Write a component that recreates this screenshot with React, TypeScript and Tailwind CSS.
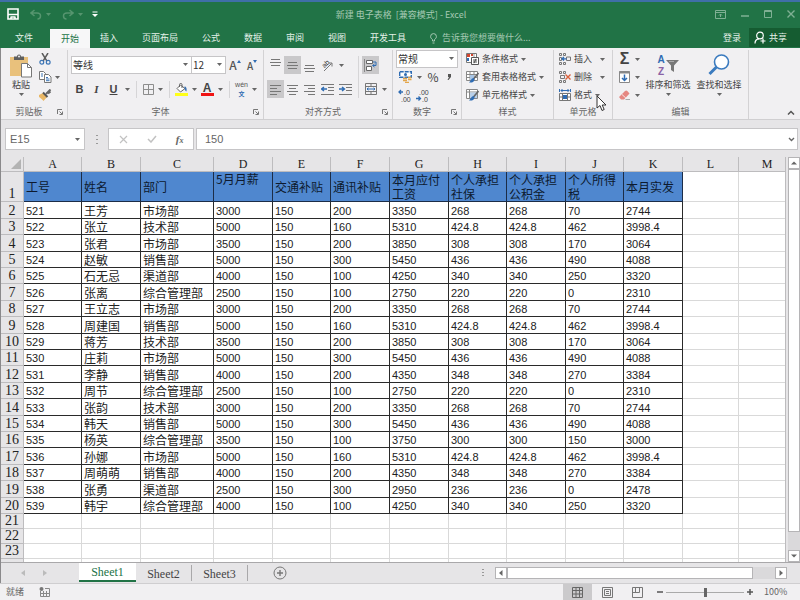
import { useState } from "react";
import type { ReactNode } from "react";

const COLUMNS = [
  { name: "A", width: "w-[58px]" },
  { name: "B", width: "w-[59px]" },
  { name: "C", width: "w-[73px]" },
  { name: "D", width: "w-[59px]" },
  { name: "E", width: "w-[58px]" },
  { name: "F", width: "w-[59px]" },
  { name: "G", width: "w-[59px]" },
  { name: "H", width: "w-[58px]" },
  { name: "I", width: "w-[59px]" },
  { name: "J", width: "w-[58px]" },
  { name: "K", width: "w-[59px]" },
  { name: "L", width: "w-[56px]" },
  { name: "M", width: "w-[57px]" },
];

const FIELDS = [
  "工号", "姓名", "部门", "5月月薪", "交通补贴", "通讯补贴",
  "本月应付工资", "个人承担社保", "个人承担公积金", "个人所得税", "本月实发",
];

const ROWS = [
  ["521", "王芳", "市场部", "3000", "150", "200", "3350", "268", "268", "70", "2744"],
  ["522", "张立", "技术部", "5000", "150", "160", "5310", "424.8", "424.8", "462", "3998.4"],
  ["523", "张君", "市场部", "3500", "150", "200", "3850", "308", "308", "170", "3064"],
  ["524", "赵敏", "销售部", "5000", "150", "300", "5450", "436", "436", "490", "4088"],
  ["525", "石无忌", "渠道部", "4000", "150", "100", "4250", "340", "340", "250", "3320"],
  ["526", "张离", "综合管理部", "2500", "150", "100", "2750", "220", "220", "0", "2310"],
  ["527", "王立志", "市场部", "3000", "150", "200", "3350", "268", "268", "70", "2744"],
  ["528", "周建国", "销售部", "5000", "150", "160", "5310", "424.8", "424.8", "462", "3998.4"],
  ["529", "蒋芳", "技术部", "3500", "150", "200", "3850", "308", "308", "170", "3064"],
  ["530", "庄莉", "市场部", "5000", "150", "300", "5450", "436", "436", "490", "4088"],
  ["531", "李静", "销售部", "4000", "150", "200", "4350", "348", "348", "270", "3384"],
  ["532", "周节", "综合管理部", "2500", "150", "100", "2750", "220", "220", "0", "2310"],
  ["533", "张韵", "技术部", "3000", "150", "200", "3350", "268", "268", "70", "2744"],
  ["534", "韩天", "销售部", "5000", "150", "300", "5450", "436", "436", "490", "4088"],
  ["535", "杨英", "综合管理部", "3500", "150", "100", "3750", "300", "300", "150", "3000"],
  ["536", "孙娜", "市场部", "5000", "150", "160", "5310", "424.8", "424.8", "462", "3998.4"],
  ["537", "周萌萌", "销售部", "4000", "150", "200", "4350", "348", "348", "270", "3384"],
  ["538", "张勇", "渠道部", "2500", "150", "300", "2950", "236", "236", "0", "2478"],
  ["539", "韩宇", "综合管理部", "4000", "150", "100", "4250", "340", "340", "250", "3320"],
];

const MENU_TABS = ["插入", "页面布局", "公式", "数据", "审阅", "视图", "开发工具"];

/* ---------- icons ---------- */

function Svg({ w, h, children }: { w: number; h: number; children: ReactNode }) {
  return (
    <svg width={w} height={h} viewBox={`0 0 ${w} ${h}`} fill="none" className="shrink-0" aria-hidden="true">
      {children}
    </svg>
  );
}

const Caret = ({ color = "#666" }: { color?: string }) => (
  <Svg w={5} h={3}><path d="M0 0h5L2.5 3z" fill={color} /></Svg>
);

const SaveIcon = () => (
  <Svg w={12} h={12}>
    <path d="M1 1h10v10H1z" stroke="#fff" strokeWidth="1.6" />
    <path d="M1 6.500h10M4 8.500v2.500M8 8.500v2.500M4 9h4" stroke="#fff" strokeWidth="1.5" />
  </Svg>
);

const UndoIcon = () => (
  <Svg w={12} h={11}>
    <path d="M4.500 1 1 4l3.500 3M1.500 4H7c2 0 3.500 1.200 3.500 3S9.500 10 7.500 10" stroke="#56956f" strokeWidth="1.500" />
  </Svg>
);

const RedoIcon = () => (
  <Svg w={12} h={11}>
    <path d="M7.500 1 11 4 7.500 7M10.500 4H5C3 4 1.500 5.200 1.500 7S2.500 10 4.500 10" stroke="#56956f" strokeWidth="1.500" />
  </Svg>
);

const PasteIcon = () => (
  <Svg w={22} h={24}>
    <path d="M0 3h18v19H0z" fill="#e9c17c" />
    <path d="M4 2.500h3a2 2 0 0 1 4 0h3V6H4z" fill="#5f5f5f" />
    <circle cx="9" cy="2.500" r="1" fill="#f1f0f2" />
    <path d="M11.500 9.500h6l4 4v9.500h-10z" fill="#fff" stroke="#777" />
    <path d="M17.500 9.500v4h4" stroke="#777" />
  </Svg>
);

const CutIcon = () => (
  <Svg w={12} h={12}>
    <path d="M3 0l4.800 7.800M9 0 4.200 7.800" stroke="#5c5c5c" strokeWidth="1.500" />
    <circle cx="2.800" cy="9.300" r="1.900" stroke="#3b74b5" strokeWidth="1.200" />
    <circle cx="9.200" cy="9.300" r="1.900" stroke="#3b74b5" strokeWidth="1.200" />
  </Svg>
);

const CopyIcon = () => (
  <Svg w={13} h={12}>
    <path d="M.5.5h4l2 2v6h-6z" fill="#fff" stroke="#777" />
    <path d="M2 3h2M2 5h2" stroke="#3b74b5" />
    <path d="M5.500 3.500h4l2.500 2.500v5.500H5.500z" fill="#fff" stroke="#777" />
    <path d="M7 6.500h2M7 8h3.500M7 9.700h3.500" stroke="#3b74b5" />
  </Svg>
);

const BrushIcon = () => (
  <Svg w={13} h={12}>
    <path d="M0 6l4-2 4 4-3.500 4C3 10 1.500 9 0 8z" fill="#e9b765" />
    <path d="M4 3.500 8.500 8" stroke="#555" strokeWidth="2" />
    <path d="M7 5l4.500-4.500M9 4.500l2.500-2" stroke="#666" strokeWidth="2" />
  </Svg>
);

const BordersIcon = () => (
  <Svg w={11} h={11}>
    <path d="M.5.5h10v10H.5zM5.500.5v10M.5 5.500h10" stroke="#8d8d8d" />
  </Svg>
);

const FillIcon = () => (
  <Svg w={14} h={13}>
    <path d="M5.500 2 2 5.500 5.500 9 10 5.500z" fill="#fff" stroke="#666" />
    <path d="M4.500 4V1.500c0-1.500 2.500-1.500 2.500 0V5" stroke="#666" />
    <path d="M9.500 3.500c2 0 2.500 2 2 5-1.500-.5-1.500-2-2-3z" fill="#3b74b5" />
    <path d="M0 10h13v3H0z" fill="#ffff1a" />
  </Svg>
);

const PhoneticIcon = () => (
  <span className="flex flex-col items-center">
    <span className="text-[7px] leading-[8px] text-[#555]">wén</span>
    <span className="font-['Noto_Sans_CJK_SC',sans-serif] text-[6px] leading-[9px] font-bold text-[#2f6cb3]">文</span>
  </span>
);

function LinesIcon({ d }: { d: string }) {
  return <Svg w={11} h={13}><path d={d} stroke="#777" /></Svg>;
}

const OrientationIcon = () => (
  <Svg w={14} h={14}>
    <text x="2" y="8" fontSize="7" fill="#333" className="font-['Liberation_Sans',sans-serif]" transform="rotate(-45 6 6)">ab</text>
    <path d="M4 13l7.500-7.500M8.500 5H12v3.500" stroke="#777" />
  </Svg>
);

function IndentIcon({ right = false }: { right?: boolean }) {
  return (
    <Svg w={13} h={11}>
      <path d="M0 .5h13M7 3.500h6M7 6.500h6M0 10.500h13" stroke="#777" />
      <path d={right ? "M0 5h5M3 3l2.500 2L3 7" : "M6 5H1M3 3 .5 5 3 7"} stroke="#2f6cb3" strokeWidth="1.400" />
    </Svg>
  );
}

const WrapIcon = () => (
  <Svg w={13} h={13}>
    <path d="M.5 0v13" stroke="#888" />
    <path d="M2.500 1.500h6v3h-6zM2.500 7.500h5v4h-5z" fill="#fff" stroke="#666" />
    <path d="M9 3h3v3.500H9M10.500 5 8.500 6.500l2 1.500" stroke="#2f6cb3" />
  </Svg>
);

const MergeIcon = () => (
  <Svg w={12} h={12}>
    <path d="M.5.5h11v11H.5zM.5 3.500h11M.5 8.500h11M6 .5v3M6 8.500v3" stroke="#777" />
    <path d="M2 6h8M3.500 4.800 2 6l1.500 1.200M8.500 4.800 10 6 8.500 7.200" stroke="#2f6cb3" />
  </Svg>
);

const CurrencyIcon = () => (
  <Svg w={13} h={12}>
    <path d="M.7.7h11.600v5.600H.7z" fill="#fff" stroke="#2f6cb3" strokeWidth="1.400" strokeDasharray="4 1" />
    <circle cx="6.500" cy="3.500" r="1.500" fill="#2f6cb3" />
    <path d="M4 7.500h4M4 9.500h4M9 6.500h3.500M9 8.500h3.500M6 11.500h4" stroke="#e3a64c" strokeWidth="1.500" />
  </Svg>
);

function DecimalIcon({ more = false }: { more?: boolean }) {
  return (
    <Svg w={14} h={13}>
      <path d={more ? "M5 3H1M3 1 1 3l2 2" : "M0 9.500h4M2.500 7.500l2 2-2 2"} stroke="#2f6cb3" strokeWidth="1.300" />
      <text x={more ? 6 : 3} y="6" fontSize="7" fill="#444">{more ? ".0" : ".00"}</text>
      <text x={more ? 3 : 6} y="13" fontSize="7" fill="#444">{more ? ".00" : ".0"}</text>
    </Svg>
  );
}

const CondFormatIcon = () => (
  <Svg w={13} h={12}>
    <path d="M.5.5h10v9H.5z" fill="#fff" stroke="#777" />
    <path d="M1 1h3v3H1zM5 1h2v2H5z" fill="#d2452f" />
    <path d="M1 5h2v3H1z" fill="#2f6cb3" />
    <path d="M8 1v3" stroke="#999" />
    <path d="M5.500 4.500h7v7h-7z" fill="#fff" stroke="#555" />
    <path d="M7 7h4M7 9h4M10 5.800 8 10.200" stroke="#444" strokeWidth=".9" />
  </Svg>
);

const TableFormatIcon = () => (
  <Svg w={13} h={12}>
    <path d="M.5.5h11v9H.5zM.5 3.500h11M.5 6.500h11M4 .5v9M8 .5v9" fill="#fff" stroke="#888" />
    <path d="M4 4h4v5H4z" fill="#a9c6e6" />
    <path d="M12.500 2 7.500 8" stroke="#666" strokeWidth="1.600" />
    <path d="M7.500 7c-2 0-2.500 2.500-4.500 4.500 3 .5 5.500-.5 5.500-3.500z" fill="#2f6cb3" />
  </Svg>
);

const CellStyleIcon = () => (
  <Svg w={13} h={12}>
    <path d="M.5.5h11v9H.5zM.5 3h11M3.500 .5v9" fill="#fff" stroke="#888" />
    <path d="M4 3.500h7v5.500H4z" fill="#b9d0ea" />
    <path d="M12.500 2 7.500 8" stroke="#666" strokeWidth="1.600" />
    <path d="M7.500 7c-2 0-2.500 2.500-4.500 4.500 3 .5 5.500-.5 5.500-3.500z" fill="#2f6cb3" />
  </Svg>
);

const InsertCellIcon = () => (
  <Svg w={12} h={12}>
    <path d="M.5.5h2v2h-2zM4.500.5h2v2h-2zM.5 9.500h2v2h-2zM4.500 9.500h2v2h-2zM.5 4.500h2v3h-2zM7.500 4h4v3.500h-4z" stroke="#777" />
    <path d="M7.500 5.800h-4M5 4 3 5.800l2 1.700" stroke="#2f6cb3" strokeWidth="1.300" />
  </Svg>
);

const DeleteCellIcon = () => (
  <Svg w={12} h={12}>
    <path d="M.5.5h2v2h-2zM4.500.5h2v2h-2zM.5 9.500h2v2h-2zM4.500 9.500h2v2h-2zM1.500 4.500h4v3h-4z" stroke="#777" />
    <path d="M6.500 3.500l5 5M11.500 3.500l-5 5" stroke="#d9603b" strokeWidth="1.400" />
  </Svg>
);

const FormatCellIcon = () => (
  <Svg w={12} h={12}>
    <path d="M.5 0v3M11.500 0v3M2 1.500h8M3.500 0 2 1.500 3.500 3M8.500 0 10 1.500 8.500 3" stroke="#2f6cb3" />
    <path d="M.5 4.500h11v7H.5zM3.500 4.500v7M8.500 4.500v7M.5 8h11" fill="#fff" stroke="#777" />
    <path d="M4 6h4v4H4z" fill="#2f6cb3" />
  </Svg>
);

const FillDownIcon = () => (
  <Svg w={11} h={12}>
    <path d="M.5.5h10v11H.5z" fill="#fff" stroke="#888" />
    <path d="M0 1.500h11" stroke="#888" strokeWidth="2" />
    <path d="M5.500 3.500V9M3 7l2.500 2.500L8 7" stroke="#2f6cb3" strokeWidth="1.500" />
  </Svg>
);

const EraserIcon = () => (
  <Svg w={12} h={11}>
    <path d="M0 7 6 1c.8-.8 1.700-.8 2.300 0L10.500 3.500 5 9.500H2z" fill="#e58782" />
    <path d="M3 4.500l3.800 3.500" stroke="#fff" strokeWidth=".8" />
    <path d="M6.500 9.500h4.500" stroke="#aaa" />
  </Svg>
);

const SortFilterIcon = () => (
  <span className="flex items-center gap-px font-['Liberation_Sans',sans-serif] text-[10px] leading-[12px] font-bold">
    <span className="flex flex-col">
      <span className="text-[#2f6cb3]">A</span>
      <span className="text-[#8a62a5]">Z</span>
    </span>
    <Svg w={13} h={13}>
      <path d="M0 0h13L8 5.500V12l-3-2V5.500z" fill="#777" />
      <path d="M3 1.500h5" stroke="#aaa" />
    </Svg>
  </span>
);

const FindIcon = () => (
  <Svg w={22} h={22}>
    <circle cx="13.500" cy="8" r="7" fill="#fff" stroke="#3b7bbf" strokeWidth="1.600" />
    <path d="M8.500 13 1.500 20" stroke="#3b7bbf" strokeWidth="3" />
  </Svg>
);

const LauncherIcon = () => (
  <Svg w={6} h={6}>
    <path d="M.5 5V.5H5M2.500 2.500 5 5M5.500 2.500v3h-3" stroke="#777" />
  </Svg>
);

/* ---------- ribbon pieces ---------- */

function Tool({ label, className, active = false, children }: {
  label: string; className: string; active?: boolean; children: ReactNode;
}) {
  return (
    <button
      type="button"
      aria-label={label}
      className={`flex h-[18px] shrink-0 items-center justify-center ${active ? "bg-[#c9c8ca]" : ""} ${className}`}
    >
      {children}
    </button>
  );
}

const Drop = ({ label }: { label: string }) => (
  <Tool label={label} className="w-[10px]"><Caret /></Tool>
);

const Sep = () => <span className="mx-1 h-[17px] w-px shrink-0 bg-[#d6d5d7]" />;

function Group({ title, width, launcher = false, children }: {
  title: string; width: string; launcher?: boolean; children: ReactNode;
}) {
  return (
    <section className={`relative mt-0.5 flex shrink-0 flex-col border-r border-[#d3d2d4] ${width}`}>
      <div className="flex h-[54px]">{children}</div>
      <div className="flex h-[15px] items-center">
        <h2 className="flex-1 text-center text-[9px] leading-[15px] text-[#666]">{title}</h2>
        {launcher && (
          <button type="button" aria-label={`${title}设置`} className="w-[10px]"><LauncherIcon /></button>
        )}
      </div>
    </section>
  );
}

function Picker({ label, options, className }: { label: string; options: string[]; className: string }) {
  return (
    <div className={`relative h-[18px] border border-[#c6c5c7] bg-white ${className}`}>
      <select
        aria-label={label}
        className="block h-4 w-full appearance-none bg-transparent pl-px text-[10px] leading-4 text-[#333] outline-none"
      >
        {options.map(o => <option key={o}>{o}</option>)}
      </select>
      <span className="pointer-events-none absolute top-[6px] right-[3px]"><Caret /></span>
    </div>
  );
}

function MenuRow({ icon, text, caret = "ml-[3px]" }: { icon: ReactNode; text: string; caret?: string }) {
  return (
    <button type="button" className="flex h-[18px] items-center whitespace-nowrap text-[9px] text-[#444]">
      {icon}
      <span className="ml-[3px]">{text}</span>
      <span className={caret}><Caret /></span>
    </button>
  );
}

function BigButton({ icon, text, className }: { icon: ReactNode; text: string; className: string }) {
  return (
    <button type="button" className={`flex shrink-0 flex-col items-center pt-1 text-[9px] text-[#444] ${className}`}>
      <span className="flex h-[24px] items-start">{icon}</span>
      <span className="whitespace-nowrap leading-[13px]">{text}</span>
      <span className="mt-0.5"><Caret /></span>
    </button>
  );
}

function Ribbon() {
  return (
    <div className="flex h-[72px] shrink-0 border-b border-[#d0cfd1] bg-[#f1f0f2]">
      <Group title="剪贴板" width="w-[67px]" launcher>
        <BigButton icon={<PasteIcon />} text="粘贴" className="ml-1 w-[32px]" />
        <div className="ml-px flex flex-col">
          <Tool label="剪切" className="w-[14px]"><CutIcon /></Tool>
          <div className="flex">
            <Tool label="复制" className="w-[14px]"><CopyIcon /></Tool>
            <Drop label="复制选项" />
          </div>
          <Tool label="格式刷" className="w-[14px]"><BrushIcon /></Tool>
        </div>
      </Group>

      <Group title="字体" width="w-[196px]" launcher>
        <div className="flex flex-col gap-1.5 px-[3px] pt-1.5">
          <div className="flex">
            <Picker label="字体名称" options={["等线", "宋体", "黑体"]} className="w-[121px]" />
            <Picker label="字号" options={["12", "11", "14"]} className="w-[34px] border-l-0" />
            <Tool label="增大字号" className="w-[18px]">
              <span className="text-[12px] font-medium text-[#555]">A</span>
              <span className="-mt-2"><Svg w={4} h={3}><path d="M0 3h4L2 0z" fill="#2f6cb3" /></Svg></span>
            </Tool>
            <Tool label="减小字号" className="w-[16px]">
              <span className="text-[10px] font-medium text-[#555]">A</span>
              <span className="-mt-2"><Svg w={4} h={3}><path d="M0 0h4L2 3z" fill="#2f6cb3" /></Svg></span>
            </Tool>
          </div>
          <div className="flex items-center font-['Liberation_Sans',sans-serif] text-[11px] text-[#444]">
            <Tool label="加粗" className="w-[17px] font-bold">B</Tool>
            <Tool label="倾斜" className="w-[17px] font-['Liberation_Serif',serif] font-bold italic">I</Tool>
            <Tool label="下划线" className="w-[17px] font-bold underline">U</Tool>
            <Drop label="下划线选项" />
            <Sep />
            <Tool label="边框" className="w-[14px]"><BordersIcon /></Tool>
            <Drop label="边框选项" />
            <Sep />
            <Tool label="填充颜色" className="w-[15px]"><FillIcon /></Tool>
            <Drop label="填充颜色选项" />
            <Tool label="字体颜色" className="w-[16px]">
              <span className="flex flex-col items-center">
                <span className="text-[12px] leading-[10px] font-bold">A</span>
                <span className="h-[3px] w-[13px] bg-[#f01414]" />
              </span>
            </Tool>
            <Drop label="字体颜色选项" />
            <Sep />
            <Tool label="拼音" className="w-[15px]"><PhoneticIcon /></Tool>
            <Drop label="拼音选项" />
          </div>
        </div>
      </Group>

      <Group title="对齐方式" width="w-[129px]" launcher>
        <div className="flex flex-col gap-1.5 pt-1.5 pl-[3px]">
          <div className="flex">
            <Tool label="顶端对齐" className="w-[17px]"><LinesIcon d="M1 .5h9M0 3.500h11M1 6.500h9" /></Tool>
            <Tool label="垂直居中" active className="w-[17px]"><LinesIcon d="M1 3.500h9M0 6.500h11M1 9.500h9" /></Tool>
            <Tool label="底端对齐" className="w-[17px]"><LinesIcon d="M1 6.500h9M0 9.500h11M1 12.500h9" /></Tool>
            <Tool label="方向" className="w-[18px]"><OrientationIcon /></Tool>
            <Drop label="方向选项" />
          </div>
          <div className="flex">
            <Tool label="左对齐" active className="w-[17px]"><LinesIcon d="M0 2.500h11M0 5.500h7M0 8.500h11M0 11.500h7" /></Tool>
            <Tool label="居中" className="w-[17px]"><LinesIcon d="M0 2.500h11M2 5.500h7M0 8.500h11M2 11.500h7" /></Tool>
            <Tool label="右对齐" className="w-[17px]"><LinesIcon d="M0 2.500h11M4 5.500h7M0 8.500h11M4 11.500h7" /></Tool>
            <Tool label="减少缩进" className="w-[18px]"><IndentIcon /></Tool>
            <Tool label="增加缩进" className="w-[18px]"><IndentIcon right /></Tool>
          </div>
        </div>
        <span className="mt-1.5 mr-[3px] ml-1 h-[42px] w-px bg-[#d6d5d7]" />
        <div className="flex flex-col gap-1.5 pt-1.5">
          <Tool label="自动换行" active className="w-[17px]"><WrapIcon /></Tool>
          <div className="flex">
            <Tool label="合并后居中" className="w-[17px]"><MergeIcon /></Tool>
            <Drop label="合并选项" />
          </div>
        </div>
      </Group>

      <Group title="数字" width="w-[69px]" launcher>
        <div className="flex flex-col pl-[3px]">
          <Picker label="数字格式" options={["常规", "数字", "货币"]} className="w-[62px]" />
          <div className="flex">
            <Tool label="会计数字格式" className="w-[18px]"><CurrencyIcon /></Tool>
            <Drop label="会计选项" />
            <Tool label="百分比样式" className="w-[18px] text-[12px] text-[#444]">%</Tool>
            <Tool label="千位分隔样式" className="w-[14px]">
              <Svg w={4} h={6}><path d="M1 0h3v3L1.500 6H.5L2 3H1z" fill="#555" /></Svg>
            </Tool>
          </div>
          <div className="flex font-['Liberation_Sans',sans-serif]">
            <Tool label="增加小数位数" className="w-[18px]"><DecimalIcon more /></Tool>
            <Tool label="减少小数位数" className="w-[18px]"><DecimalIcon /></Tool>
          </div>
        </div>
      </Group>

      <Group title="样式" width="w-[92px]">
        <div className="flex flex-col pl-1">
          <MenuRow icon={<CondFormatIcon />} text="条件格式" />
          <MenuRow icon={<TableFormatIcon />} text="套用表格格式" />
          <MenuRow icon={<CellStyleIcon />} text="单元格样式" />
        </div>
      </Group>

      <Group title="单元格" width="w-[59px]">
        <div className="flex flex-col pl-[5px]">
          <MenuRow icon={<InsertCellIcon />} text="插入" caret="ml-2" />
          <MenuRow icon={<DeleteCellIcon />} text="删除" caret="ml-2" />
          <MenuRow icon={<FormatCellIcon />} text="格式" />
        </div>
        {/* mouse pointer */}
        <span className="pointer-events-none absolute top-[45px] left-[42px] z-10">
          <Svg w={11} h={17}>
            <path d="M1 1v12l3-2.500L6 15.500l2.200-1-2-4.500H10z" fill="#fff" stroke="#333" />
          </Svg>
        </span>
      </Group>

      <Group title="编辑" width="w-[136px]">
        <div className="flex flex-col pl-1">
          <div className="flex">
            <Tool label="自动求和" className="w-[15px] font-['Liberation_Sans',sans-serif] text-[16px] font-bold text-[#444]">Σ</Tool>
            <Drop label="求和选项" />
          </div>
          <div className="flex"><Tool label="填充" className="w-[15px]"><FillDownIcon /></Tool><Drop label="填充选项" /></div>
          <div className="flex"><Tool label="清除" className="w-[15px]"><EraserIcon /></Tool><Drop label="清除选项" /></div>
        </div>
        <BigButton icon={<SortFilterIcon />} text="排序和筛选" className="w-[52px]" />
        <BigButton icon={<FindIcon />} text="查找和选择" className="w-[50px]" />
      </Group>

      <div className="flex flex-1 items-end justify-end pr-[5px] pb-1">
        <button type="button" aria-label="折叠功能区">
          <Svg w={8} h={5}><path d="M1 4.500 4 1.500l3 3" stroke="#555" strokeWidth="1.500" /></Svg>
        </button>
      </div>
    </div>
  );
}

/* ---------- window chrome ---------- */

function TitleBar() {
  return (
    <header className="shrink-0 border-t-2 border-[#3f6fa8] bg-[#217346] text-[9px] text-[#e4f1e9]">
      <div className="flex h-[26px] items-center">
        <div className="flex flex-1 items-center pb-0.5 pl-[7px]">
          <button type="button" aria-label="保存"><SaveIcon /></button>
          <button type="button" aria-label="撤消" className="ml-[11px] flex items-center gap-1"><UndoIcon /><Caret color="#56956f" /></button>
          <button type="button" aria-label="恢复" className="ml-[11px] flex items-center gap-1"><RedoIcon /><Caret color="#56956f" /></button>
          <button type="button" aria-label="自定义快速访问工具栏" className="ml-[9px]">
            <Svg w={6} h={6}><path d="M.5 1h5" stroke="#fff" /><path d="M0 3h6L3 6z" fill="#fff" /></Svg>
          </button>
        </div>
        <h1 className="whitespace-nowrap text-[#a5c9b3]">新建 电子表格&nbsp; [兼容模式] - Excel</h1>
        <div className="flex flex-1 items-center justify-end gap-[15px] pr-[5px] pb-0.5 text-[#7fb094]">
          <button type="button" aria-label="功能区显示选项">
            <Svg w={11} h={9}><path d="M.5.5h10v8H.5zM.5 2.500h10M5.500 7V4M4 5.500 5.500 4 7 5.500" stroke="currentColor" /></Svg>
          </button>
          <button type="button" aria-label="最小化"><Svg w={8} h={8}><path d="M0 6h8" stroke="currentColor" strokeWidth="1.500" /></Svg></button>
          <button type="button" aria-label="最大化"><Svg w={8} h={8}><path d="M.5.5h7v7h-7zM0 1.500h8" stroke="currentColor" /></Svg></button>
          <button type="button" aria-label="关闭"><Svg w={8} h={8}><path d="M.5.5l7 7M7.500.5l-7 7" stroke="currentColor" strokeWidth="1.400" /></Svg></button>
        </div>
      </div>
      <div className="flex h-[20px] items-stretch whitespace-nowrap">
        <button type="button" className="w-[50px] pr-0.5">文件</button>
        <button type="button" className="mt-px w-[40px] bg-[#f7f7f8] text-[#217346]">开始</button>
        <nav className="flex gap-6 pl-2.5">
          {MENU_TABS.map(t => <button type="button" key={t}>{t}</button>)}
        </nav>
        <label className="ml-[24px] flex items-center gap-[5px] text-[#a5c9b3]">
          <Svg w={7} h={11}>
            <path d="M2.500 8V6.500C1 5.500.6 4.500.6 3.500a2.900 2.900 0 0 1 5.800 0c0 1-.4 2-1.900 3V8zM2.500 10h2" stroke="currentColor" />
          </Svg>
          <input
            aria-label="告诉我"
            placeholder="告诉我您想要做什么..."
            className="w-[100px] bg-transparent outline-none placeholder:text-[#a5c9b3]"
          />
        </label>
        <div className="flex-1" />
        <button type="button" className="mr-2">登录</button>
        <button type="button" className="mb-px flex w-[51px] items-center gap-[3px] bg-[#155c31] pl-[5px]">
          <Svg w={12} h={13}>
            <circle cx="6" cy="4.500" r="3.300" stroke="#fff" strokeWidth="1.200" />
            <path d="M1 12.500c0-3 1.500-4.500 4-4.700M9 7.500v5M6.500 10h5" stroke="#fff" strokeWidth="1.200" />
          </Svg>
          共享
        </button>
      </div>
    </header>
  );
}

function FormulaBar() {
  const [value, setValue] = useState("150");
  return (
    <div className="flex shrink-0 pt-2 pr-0.5 pb-[7px] pl-1 font-['Liberation_Sans','Noto_Sans_CJK_SC',sans-serif] text-[11px] text-[#666]">
      <div className="relative flex h-[22px] w-[80px] items-center border border-[#c6c5c7] bg-white">
        <input aria-label="名称框" defaultValue="E15" className="w-full bg-transparent pl-1 outline-none" />
        <button type="button" aria-label="名称列表" className="pr-1"><Caret /></button>
      </div>
      <span className="flex w-[23px] items-center justify-center">
        <Svg w={2} h={9}><path d="M1 0v9" stroke="#999" strokeWidth="2" strokeDasharray="1 3" /></Svg>
      </span>
      <div className="flex h-[22px] w-[86px] items-center justify-around border border-[#c6c5c7] bg-white">
        <button type="button" aria-label="取消"><Svg w={9} h={9}><path d="M1 1l7 7M8 1 1 8" stroke="#c2c2c2" strokeWidth="1.200" /></Svg></button>
        <button type="button" aria-label="输入"><Svg w={10} h={8}><path d="M1 4l3 3 5-6" stroke="#c2c2c2" strokeWidth="1.500" /></Svg></button>
        <button type="button" aria-label="插入函数" className="font-['Liberation_Serif',serif] font-bold italic">
          f<span className="text-[8px]">x</span>
        </button>
      </div>
      <div className="ml-0.5 flex h-[22px] flex-1 items-center border border-[#c6c5c7] bg-white">
        <input
          aria-label="编辑栏"
          value={value}
          onChange={e => setValue(e.target.value)}
          className="min-w-0 flex-1 bg-transparent pl-2 outline-none"
        />
        <button type="button" aria-label="展开编辑栏" className="pr-0.5">
          <Svg w={7} h={5}><path d="M1 1l2.500 2.500L6 1" stroke="#666" strokeWidth="1.400" /></Svg>
        </button>
      </div>
    </div>
  );
}

/* ---------- sheet ---------- */

const ROW_HEAD = "border-r border-b border-[#bdbcbe] bg-[#e6e5e7] p-0 text-center align-bottom font-['Liberation_Serif',serif] text-[14px] font-normal text-[#222]";

function Sheet() {
  return (
    <table className="w-[795px] table-fixed border-separate border-spacing-0 text-[#222]">
      <colgroup>
        <col className="w-[23px]" />
        {COLUMNS.map(c => <col key={c.name} className={c.width} />)}
      </colgroup>
      <thead>
        <tr className="h-[15px] bg-[#e6e5e7]">
          <td className="border-r border-b border-[#bdbcbe] p-0">
            <span className="flex justify-end pr-0.5">
              <Svg w={10} h={10}><path d="M10 0v10H0z" fill="#b3b3b3" /></Svg>
            </span>
          </td>
          {COLUMNS.map(c => (
            <th
              key={c.name}
              scope="col"
              className="border-r border-b border-[#bdbcbe] p-0 font-['Liberation_Serif',serif] text-[12px] leading-[14px] font-normal"
            >
              {c.name}
            </th>
          ))}
        </tr>
      </thead>
      <tbody>
        <tr className="h-[30px]">
          <th scope="row" className={`${ROW_HEAD} leading-[14px]`}>1</th>
          {FIELDS.map(f => (
            <td
              key={f}
              className={`border-r border-b border-[#1c2d47] bg-[#4f87cf] p-0 pl-0.5 text-[12px] leading-[14px] text-[#0d1a2e] ${
                f === "5月月薪" ? "align-top" : "align-middle"
              }`}
            >
              {f}
            </td>
          ))}
          <td className="border-r border-b border-[#d9d9d9]" />
          <td className="border-r border-b border-[#d9d9d9]" />
        </tr>
        {ROWS.map((row, i) => (
          <tr key={row[0]} className={i % 5 === 0 || i % 5 === 2 ? "h-[17px]" : "h-[16px]"}>
            <th scope="row" className={`${ROW_HEAD} leading-[14px]`}>{i + 2}</th>
            {row.map((cell, j) => (
              <td
                key={j}
                className={`border-r border-b border-[#2a2a2a] p-0 pl-0.5 align-bottom whitespace-nowrap ${
                  j === 1 || j === 2
                    ? "text-[12px] leading-[14px]"
                    : "font-['Liberation_Sans',sans-serif] text-[11px] leading-[14px]"
                }`}
              >
                {cell}
              </td>
            ))}
            <td className="border-r border-b border-[#d9d9d9] p-0" />
            <td className="border-r border-b border-[#d9d9d9] p-0" />
          </tr>
        ))}
        {["21", "22", "23", ""].map(n => (
          <tr key={n} className="h-[15px]">
            <th scope="row" className={`${ROW_HEAD} leading-[14px]`}>{n}</th>
            {COLUMNS.map(c => <td key={c.name} className="border-r border-b border-[#d9d9d9] p-0" />)}
          </tr>
        ))}
      </tbody>
    </table>
  );
}

function ScrollButton({ label, d }: { label: string; d: string }) {
  return (
    <button
      type="button"
      aria-label={label}
      className="flex size-[12px] shrink-0 items-center justify-center border border-[#b5b4b6] bg-white"
    >
      <Svg w={6} h={6}><path d={d} fill="#666" /></Svg>
    </button>
  );
}

function SheetTabs() {
  const [active, setActive] = useState("Sheet1");
  return (
    <div className="flex h-[21px] shrink-0 items-stretch border-t border-[#a9a8aa] pr-[13px] font-['Liberation_Serif',serif] text-[12px]">
      <div className="flex w-[78px] items-center gap-[18px] pl-[20px]">
        <button type="button" aria-label="上一张"><Svg w={4} h={6}><path d="M4 0v6L0 3z" fill="#bbb" /></Svg></button>
        <button type="button" aria-label="下一张"><Svg w={4} h={6}><path d="M0 0v6l4-3z" fill="#bbb" /></Svg></button>
      </div>
      {["Sheet1", "Sheet2", "Sheet3"].map(s => (
        <button
          type="button"
          key={s}
          onClick={() => setActive(s)}
          className={
            s === active
              ? "mb-px w-[57px] border-b-2 border-[#217346] bg-white text-[#217346]"
              : "my-0.5 w-[56px] border-r border-[#a9a8aa] text-[#444]"
          }
        >
          {s}
        </button>
      ))}
      <button type="button" aria-label="新工作表" className="ml-[25px]">
        <Svg w={14} h={14}>
          <circle cx="7" cy="7" r="6" stroke="#777" />
          <path d="M4 7h6M7 4v6" stroke="#777" strokeWidth="1.400" />
        </Svg>
      </button>
      <div className="flex-1" />
      <span className="mr-[11px] flex items-center"><Svg w={2} h={9}><path d="M1 0v9" stroke="#999" strokeWidth="2" strokeDasharray="1 2" /></Svg></span>
      <div className="flex w-[292px] items-center bg-transparent">
        <ScrollButton label="向左滚动" d="M4.500 0v6L1 3z" />
        <div className="flex flex-1 bg-[#dad9db]">
          <div className="h-[12px] w-[246px] border border-[#b5b4b6] bg-white" />
        </div>
        <ScrollButton label="向右滚动" d="M1.500 0v6L5 3z" />
      </div>
    </div>
  );
}

function StatusBar() {
  return (
    <footer className="flex h-[17px] shrink-0 items-center border-t border-[#cfced0] bg-[#f1f0f2] pl-1.5 text-[9px] text-[#666]">
      <span>就绪</span>
      <button type="button" aria-label="录制宏" className="ml-[15px]">
        <Svg w={11} h={10}>
          <path d="M1.500 4v5.500h9v-8H6M1.500 6.500h9M4.500 4v5M7.500 4v5" stroke="#888" />
          <circle cx="2.500" cy="2" r="2" fill="#777" />
        </Svg>
      </button>
      <div className="flex-1" />
      <button type="button" aria-label="普通" className="flex h-4 w-[29px] items-center justify-center bg-[#cbcacc]">
        <Svg w={11} h={11}><path d="M.5.5h10v10H.5zM.5 3.500h10M.5 7h10M4 .5v10M7.500.5v10" stroke="#666" /></Svg>
      </button>
      <button type="button" aria-label="页面布局视图" className="flex h-4 w-[30px] items-center justify-center">
        <Svg w={11} h={11}><path d="M.5.5h10v10H.5zM2.500 2.500h6v6h-6zM4 4.500h3M4 6.500h3" stroke="#777" /></Svg>
      </button>
      <button type="button" aria-label="分页预览" className="flex h-4 w-[30px] items-center justify-center">
        <Svg w={11} h={11}><path d="M.5.5h10v10H.5zM3.500.5v5M.5 5.500h7V.5" stroke="#777" /></Svg>
      </button>
      <button type="button" aria-label="缩小" className="ml-[5px]"><Svg w={6} h={6}><path d="M0 3h6" stroke="#555" strokeWidth="1.500" /></Svg></button>
      <input
        type="range"
        aria-label="显示比例"
        defaultValue={50}
        className="mx-[3px] h-[9px] w-[78px] appearance-none bg-transparent bg-[linear-gradient(#aaa,#aaa)] bg-[length:100%_1px] bg-center bg-no-repeat [&::-webkit-slider-thumb]:h-[9px] [&::-webkit-slider-thumb]:w-[3px] [&::-webkit-slider-thumb]:appearance-none [&::-webkit-slider-thumb]:bg-[#666]"
      />
      <button type="button" aria-label="放大"><Svg w={6} h={6}><path d="M0 3h6M3 0v6" stroke="#555" strokeWidth="1.500" /></Svg></button>
      <span className="w-[47px] pl-[11px] text-[9px]">100%</span>
    </footer>
  );
}

export default function App() {
  return (
    <div className="flex h-screen min-w-[800px] flex-col overflow-hidden bg-[#e6e5e7] font-['Noto_Sans_CJK_SC',sans-serif]">
      <TitleBar />
      <main className="flex min-h-0 flex-1 flex-col border-l border-[#8a898b]">
        <Ribbon />
        <FormulaBar />
        <div className="flex min-h-0 flex-1">
          <div className="min-w-0 flex-1 overflow-hidden border-r border-[#bdbcbe] bg-white">
            <Sheet />
          </div>
          <div className="ml-0.5 flex w-[12px] shrink-0 flex-col bg-[#dad9db]">
            <ScrollButton label="向上滚动" d="M0 4.500h6L3 1.500z" />
            <div className="mb-[18px] flex-1 border border-[#b5b4b6] bg-white" />
            <ScrollButton label="向下滚动" d="M0 1.500h6L3 4.500z" />
          </div>
        </div>
        <SheetTabs />
      </main>
      <StatusBar />
    </div>
  );
}
